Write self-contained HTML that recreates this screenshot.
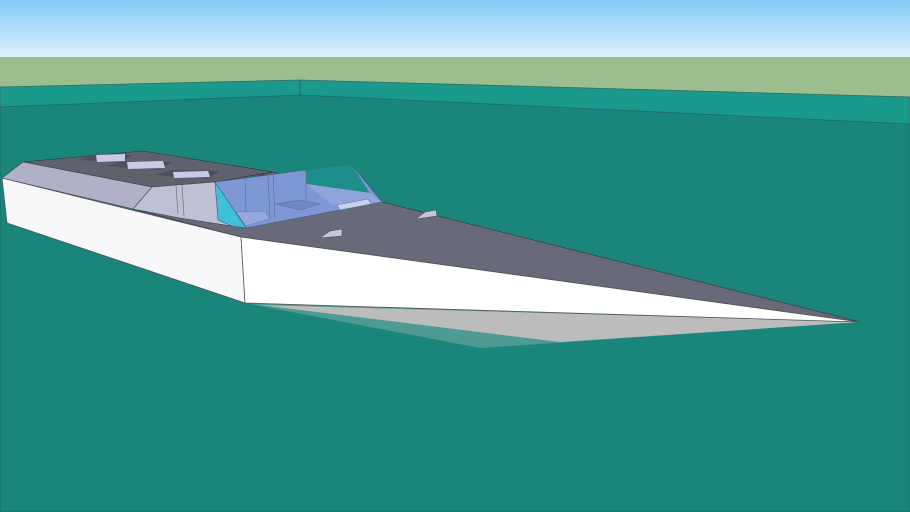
<!DOCTYPE html>
<html><head><meta charset="utf-8"><style>html,body{margin:0;padding:0;width:910px;height:512px;overflow:hidden}</style></head>
<body>
<svg width="910" height="512" viewBox="0 0 910 512" xmlns="http://www.w3.org/2000/svg">
<defs><linearGradient id="sky" x1="0" y1="0" x2="0" y2="1"><stop offset="0" stop-color="#84cbf6"/><stop offset="1" stop-color="#dcf1fd"/></linearGradient></defs>
<rect width="910" height="58" fill="url(#sky)"/>
<rect y="57" width="910" height="455" fill="#9cbe8f"/>
<polygon points="0,87 300,80 910,97 910,512 0,512" fill="#1a9a8d" stroke="#2f6e5e" stroke-width="0.8"/>
<polygon points="0,107 300,95 910,124 910,512 0,512" fill="#19857b" stroke="#1d6a62" stroke-width="0.8"/>
<line x1="300" y1="80" x2="300" y2="95" stroke="#1d6a62" stroke-width="0.8"/>
<!-- shadow -->
<polygon points="245,303 860,322 570,342 480,348" fill="#4f9a92"/>
<polygon points="260,305 860,322 560,342" fill="#bcbcbc"/>
<!-- deck -->
<polygon points="241,237 133,209 273,172 382,202 860,322" fill="#686a7a" stroke="#3a3c48" stroke-width="0.8"/>
<!-- white hulls -->
<polygon points="2,178 241,237 245,303 7,223" fill="#f8f8fa" stroke="#555" stroke-width="0.8"/>
<polygon points="241,237 860,322 245,303" fill="#ffffff" stroke="#555" stroke-width="0.8"/>
<!-- superstructure -->
<polygon points="23,162 143,151 273,172 215,182 152,187" fill="#5f616d" stroke="#333" stroke-width="0.6"/>
<polygon points="2,178 23,162 152,187 133,209" fill="#b0b1c9" stroke="#444" stroke-width="0.6"/>
<polygon points="152,187 215,182 232,226 180,218 133,209" fill="#bfbfd6" stroke="#444" stroke-width="0.6"/>
<line x1="176" y1="186" x2="178" y2="214" stroke="#666" stroke-width="0.6"/>
<line x1="182" y1="185" x2="184" y2="216" stroke="#666" stroke-width="0.6"/>
<!-- hatches -->
<polygon points="80,160 96,154 133,155 120,163" fill="#4e5060"/>
<polygon points="96,155 125,154 125,161 97,162" fill="#c9cbe6"/>
<polygon points="105,166 128,161 172,162 160,170" fill="#4e5060"/>
<polygon points="127,162 163,161 165,168 128,169" fill="#c9cbe6"/>
<polygon points="155,175 172,170 220,171 208,179" fill="#4e5060"/>
<polygon points="173,172 208,171 210,177 174,178" fill="#c9cbe6"/>
<!-- windshield/cockpit -->
<polygon points="215,182 306,170 351,164 382,202 246,228" fill="#7f97d4" stroke="#3f5a80" stroke-width="0.6"/>
<polygon points="306,170 351,164 370,193 306,184" fill="#1e8e8a"/>
<polygon points="306,184 370,193 382,202 332,205" fill="#90a4dc"/>
<polygon points="215,182 246,228 232,226 218,220" fill="#3ec0d8" stroke="#3f5a80" stroke-width="0.6"/>
<line x1="245" y1="178" x2="246" y2="212" stroke="#5a6fa0" stroke-width="0.6"/>
<line x1="268" y1="175" x2="270" y2="219" stroke="#5a6fa0" stroke-width="0.6"/>
<line x1="273" y1="174" x2="275" y2="218" stroke="#5a6fa0" stroke-width="0.6"/>
<line x1="306" y1="170" x2="306" y2="200" stroke="#5a6fa0" stroke-width="0.6"/>
<polygon points="236,212 265,211 270,219 246,226" fill="#96a8dd" stroke="#5a6fa0" stroke-width="0.5"/>
<polygon points="275,204 300,200 320,204 300,210" fill="#6f87c4" stroke="#5a6fa0" stroke-width="0.5"/>
<polygon points="337,205 368,199 371,204 340,210" fill="#c9d2ef" stroke="#5a6fa0" stroke-width="0.5"/>
<!-- vents -->
<polygon points="320,238 330,231 342,229 342,236" fill="#c4c6dc" stroke="#444" stroke-width="0.5"/>
<polygon points="416,219 425,212 436,210 437,216" fill="#c4c6dc" stroke="#444" stroke-width="0.5"/>
</svg>
</body></html>
